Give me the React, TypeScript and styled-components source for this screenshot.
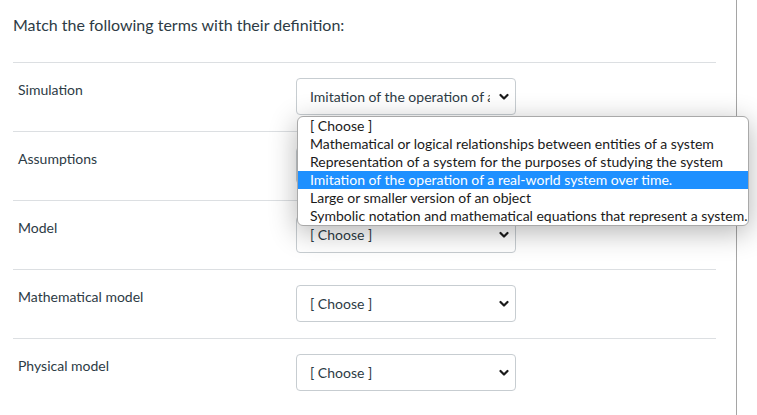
import React from 'react'
import styled, { createGlobalStyle } from 'styled-components'

type Pair = {
  term: string
  value: string
  open?: boolean
}

const OPTIONS = [
  '[ Choose ]',
  'Mathematical or logical relationships between entities of a system',
  'Representation of a system for the purposes of studying the system',
  'Imitation of the operation of a real-world system over time.',
  'Large or smaller version of an object',
  'Symbolic notation and mathematical equations that represent a system.',
]

const PAIRS: Pair[] = [
  { term: 'Simulation', value: 'Imitation of the operation of a real-world system over time.', open: true },
  { term: 'Assumptions', value: '[ Choose ]' },
  { term: 'Model', value: '[ Choose ]' },
  { term: 'Mathematical model', value: '[ Choose ]' },
  { term: 'Physical model', value: '[ Choose ]' },
]

const Chevron = () => (
  <ChevronIcon width="10" height="8" viewBox="0 0 10 8">
    <path d="M1.5 2 L5 5.5 L8.5 2" fill="none" stroke="#1b1b1b" strokeWidth="2.2" strokeLinecap="round" strokeLinejoin="round" />
  </ChevronIcon>
)

const Select = ({ value, open }: { value: string; open?: boolean }) => (
  <SelectWrap>
    <SelectBox>
      <SelectText>{value}</SelectText>
      <Chevron />
    </SelectBox>
    {open && (
      <Menu>
        {OPTIONS.map((o) => (
          <Option key={o} $active={o === value}>
            {o}
          </Option>
        ))}
      </Menu>
    )}
  </SelectWrap>
)

const App = () => {
  return (
    <>
      <GlobalStyle />
      <Page>
        <Title>Match the following terms with their definition:</Title>
        <List>
          {PAIRS.map((p) => (
            <Row key={p.term} $raised={!!p.open}>
              <Term>{p.term}</Term>
              <Select value={p.value} open={p.open} />
            </Row>
          ))}
        </List>
      </Page>
    </>
  )
}

export default App

const GlobalStyle = createGlobalStyle`
  html, body {
    margin: 0;
    padding: 0;
    background: #ffffff;
  }
  body {
    font-family: Lato, "Open Sans", sans-serif;
    color: #2d3b45;
  }
`

const Page = styled.div`
  width: 737px;
  min-height: 415px;
  box-sizing: border-box;
  border-right: 1px solid #a5a5a5;
  padding: 0 20px 0 13px;
`

const Title = styled.div`
  height: 62px;
  box-sizing: border-box;
  padding-top: 15px;
  font-size: 16px;
  line-height: 20px;
  color: #2d3b45;
`

const List = styled.div`
  display: flex;
  flex-direction: column;
`

const Row = styled.div<{ $raised: boolean }>`
  position: relative;
  z-index: ${(p) => (p.$raised ? 2 : 1)};
  display: grid;
  grid-template-columns: 283px 1fr;
  height: 69px;
  box-sizing: border-box;
  border-top: 1px solid #dcdfe2;
`

const Term = styled.div`
  padding: 18px 0 0 5px;
  font-size: 14px;
  line-height: 18px;
  color: #2d3b45;
`

const SelectWrap = styled.div`
  position: relative;
  padding-top: 15px;
`

const SelectBox = styled.div`
  width: 220px;
  height: 37px;
  box-sizing: border-box;
  display: flex;
  align-items: center;
  justify-content: space-between;
  padding: 0 6px 0 13px;
  border: 1px solid #c7cdd1;
  border-radius: 4px;
  background: #ffffff;
  font-size: 14px;
  color: #2d3b45;
`

const SelectText = styled.span`
  white-space: nowrap;
  overflow: hidden;
  width: 180px;
`

const ChevronIcon = styled.svg`
  flex-shrink: 0;
`

const Menu = styled.div`
  position: absolute;
  top: 53px;
  left: 1px;
  width: 452px;
  box-sizing: border-box;
  border: 1px solid #a9a9a9;
  border-radius: 6px;
  background: #ffffff;
  overflow: hidden;
  box-shadow: 0 6px 28px rgba(0, 0, 0, 0.3);
`

const Option = styled.div<{ $active: boolean }>`
  height: 18px;
  line-height: 18px;
  padding-left: 12px;
  font-size: 14px;
  white-space: nowrap;
  color: ${(p) => (p.$active ? '#ffffff' : '#1a1a1a')};
  background: ${(p) => (p.$active ? '#1e90ff' : 'transparent')};
`
